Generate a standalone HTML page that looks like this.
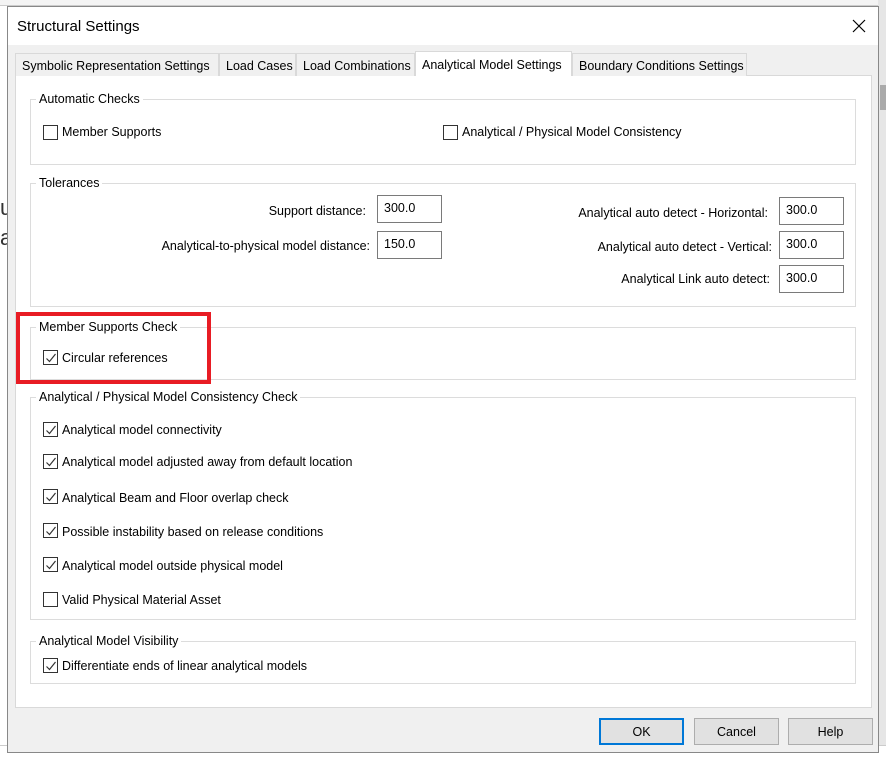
<!DOCTYPE html>
<html><head><style>
*{box-sizing:border-box;margin:0;padding:0}
body{width:886px;height:757px;position:relative;overflow:hidden;background:#fff;font-family:"Liberation Sans",sans-serif;font-size:12px;color:#000}
.a{position:absolute;white-space:nowrap}
.dlg{position:absolute;left:7px;top:6px;width:872px;height:747px;background:#f0f0f0;border:1px solid #888}
.title{position:absolute;left:0;top:0;width:870px;height:38px;background:#fff}
.panel{position:absolute;left:15px;top:75px;width:857px;height:633px;background:#fff;border:1px solid #d9d9d9}
.tab{position:absolute;top:53px;height:23px;border:1px solid #d9d9d9;border-bottom:none;background:#f0f0f0;padding:5px 0 0 6px;font-size:12.5px}
.g{position:absolute;left:30px;width:826px;border:1px solid #dcdcdc}
.gl{position:absolute;left:36px;background:#fff;padding:0 3px;font-size:12.5px}
.cb{position:absolute;width:15px;height:15px;border:1px solid #333;background:#fff}
.cb svg{position:absolute;left:1px;top:1px}
.lbl{position:absolute;font-size:12.5px;white-space:nowrap;margin-top:1px}
.in{position:absolute;width:65px;height:28px;border:1px solid #7a7a7a;background:#fff;padding:5px 0 0 6px;font-size:12.5px}
.rl{position:absolute;font-size:12.5px;text-align:right;white-space:nowrap;margin-top:1px}
.btn{position:absolute;top:718px;height:27px;width:85px;background:#e1e1e1;border:1px solid #adadad;text-align:center;padding-top:6px;font-size:12.5px}
</style></head><body>
<div class="a" style="left:0;top:0;width:886px;height:6px;background:#f4f4f4;border-bottom:1px solid #ccc"></div>
<div class="a" style="left:878px;top:0;width:8px;height:757px;background:#e6e6e6"></div>
<div class="a" style="left:880px;top:85px;width:6px;height:25px;background:#aaa"></div>
<div class="a" style="left:0;top:195px;font-size:22px;color:#333">u</div>
<div class="a" style="left:0;top:225px;font-size:22px;color:#333">a</div>
<div class="a" style="left:0;top:745px;width:886px;height:12px;background:#fff;border-top:1px solid #ccc"></div>
<div class="dlg">
<div class="title"></div>
<div class="a" style="left:9px;top:11px;font-size:15px">Structural Settings</div>
<svg class="a" style="left:844px;top:12px" width="14" height="14"><path d="M1 1L13 13M13 1L1 13" stroke="#000" stroke-width="1.2"/></svg>
</div>
<div class="panel"></div>
<div class="tab" style="left:15px;width:204px">Symbolic Representation Settings</div>
<div class="tab" style="left:219px;width:77px">Load Cases</div>
<div class="tab" style="left:296px;width:119px">Load Combinations</div>
<div class="tab" style="left:415px;top:51px;height:25px;width:157px;background:#fff;padding-top:6px">Analytical Model Settings</div>
<div class="tab" style="left:572px;width:175px">Boundary Conditions Settings</div>

<div class="g" style="top:99px;height:66px"></div><div class="gl" style="top:92px">Automatic Checks</div>
<div class="cb" style="left:43px;top:125px"></div><div class="lbl" style="left:62px;top:124px">Member Supports</div>
<div class="cb" style="left:443px;top:125px"></div><div class="lbl" style="left:462px;top:124px">Analytical / Physical Model Consistency</div>

<div class="g" style="top:183px;height:124px"></div><div class="gl" style="top:176px">Tolerances</div>
<div class="rl" style="right:520px;top:203px">Support distance:</div><div class="in" style="left:377px;top:195px">300.0</div>
<div class="rl" style="right:516px;top:238px">Analytical-to-physical model distance:</div><div class="in" style="left:377px;top:231px">150.0</div>
<div class="rl" style="right:118px;top:205px">Analytical auto detect - Horizontal:</div><div class="in" style="left:779px;top:197px">300.0</div>
<div class="rl" style="right:114px;top:239px">Analytical auto detect - Vertical:</div><div class="in" style="left:779px;top:231px">300.0</div>
<div class="rl" style="right:116px;top:271px">Analytical Link auto detect:</div><div class="in" style="left:779px;top:265px">300.0</div>

<div class="g" style="top:327px;height:53px"></div><div class="gl" style="top:320px">Member Supports Check</div>
<div class="cb" style="left:43px;top:350px"><svg width="12" height="12"><path d="M1.5 6.5L4.5 9.5L10.5 2" stroke="#333" stroke-width="1.2" fill="none"/></svg></div><div class="lbl" style="left:62px;top:350px">Circular references</div>
<div class="a" style="left:16px;top:312px;width:195px;height:72px;border:4px solid #e81c24"></div>

<div class="g" style="top:397px;height:223px"></div><div class="gl" style="top:390px">Analytical / Physical Model Consistency Check</div>
<div class="cb" style="left:43px;top:422px"><svg width="12" height="12"><path d="M1.5 6.5L4.5 9.5L10.5 2" stroke="#333" stroke-width="1.2" fill="none"/></svg></div><div class="lbl" style="left:62px;top:422px">Analytical model connectivity</div>
<div class="cb" style="left:43px;top:454px"><svg width="12" height="12"><path d="M1.5 6.5L4.5 9.5L10.5 2" stroke="#333" stroke-width="1.2" fill="none"/></svg></div><div class="lbl" style="left:62px;top:454px">Analytical model adjusted away from default location</div>
<div class="cb" style="left:43px;top:489px"><svg width="12" height="12"><path d="M1.5 6.5L4.5 9.5L10.5 2" stroke="#333" stroke-width="1.2" fill="none"/></svg></div><div class="lbl" style="left:62px;top:490px">Analytical Beam and Floor overlap check</div>
<div class="cb" style="left:43px;top:523px"><svg width="12" height="12"><path d="M1.5 6.5L4.5 9.5L10.5 2" stroke="#333" stroke-width="1.2" fill="none"/></svg></div><div class="lbl" style="left:62px;top:524px">Possible instability based on release conditions</div>
<div class="cb" style="left:43px;top:557px"><svg width="12" height="12"><path d="M1.5 6.5L4.5 9.5L10.5 2" stroke="#333" stroke-width="1.2" fill="none"/></svg></div><div class="lbl" style="left:62px;top:558px">Analytical model outside physical model</div>
<div class="cb" style="left:43px;top:592px"></div><div class="lbl" style="left:62px;top:592px">Valid Physical Material Asset</div>

<div class="g" style="top:641px;height:43px"></div><div class="gl" style="top:634px">Analytical Model Visibility</div>
<div class="cb" style="left:43px;top:658px"><svg width="12" height="12"><path d="M1.5 6.5L4.5 9.5L10.5 2" stroke="#333" stroke-width="1.2" fill="none"/></svg></div><div class="lbl" style="left:62px;top:658px">Differentiate ends of linear analytical models</div>

<div class="btn" style="left:599px;border:2px solid #0078d7;padding-top:5px">OK</div>
<div class="btn" style="left:694px">Cancel</div>
<div class="btn" style="left:788px">Help</div>
</body></html>
